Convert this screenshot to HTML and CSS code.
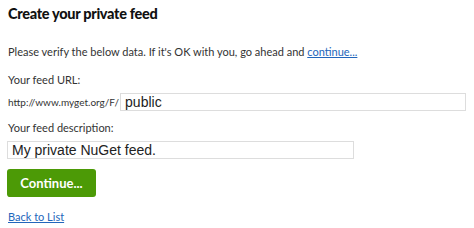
FILE: index.html
```html
<!DOCTYPE html>
<html lang="en">
  <head>
    <meta charset="UTF-8" />
    <title>Create your private feed</title>
    <link rel="stylesheet" href="styles.css">
  </head>
  <body>
    <h1>Create your private feed</h1>

    <p class="intro">
      Please verify the below data. If it's OK with you, go ahead and
      <a href="#">continue...</a>
    </p>

    <form class="feed-form">
      <div class="field">
        <label for="feed-url">Your feed URL:</label>
        <div class="url-row">
          <span class="prefix">http://www.myget.org/F/</span>
          <input id="feed-url" class="url-input" type="text" value="public" />
        </div>
      </div>

      <div class="field">
        <label for="feed-desc">Your feed description:</label>
        <input id="feed-desc" class="desc-input" type="text" value="My private NuGet feed." />
      </div>

      <button type="button" class="continue-btn">Continue...</button>
    </form>

    <a class="back" href="#">Back to List</a>
  </body>
</html>
```

FILE: styles.css
```css
body {
  margin: 0;
  padding: 4px 8px;
  font-family: Lato, "Open Sans", sans-serif;
  font-size: 11px;
  line-height: 14px;
  color: #333;
  background: white;
}
h1 {
  margin: 0;
  font-size: 14.5px;
  font-weight: 900;
  letter-spacing: -0.3px;
  color: #111;
  line-height: 20px;
}
a {
  color: #2266bb;
}
.intro {
  margin: 21px 0 14px 0;
}
.feed-form {
  margin: 0;
}
.field {
  margin-bottom: 10px;
}
.field label {
  display: block;
  margin-bottom: 6px;
}
.url-row {
  display: flex;
  align-items: center;
  gap: 1px;
}
.prefix {
  font-size: 10px;
}
input {
  display: block;
  font-family: "Liberation Sans", Arial, sans-serif;
  font-size: 14px;
  height: 18px;
  padding: 0 4px;
  border: 1px solid #ddd;
  box-sizing: border-box;
  color: #222;
}
.url-input {
  width: 347px;
}
.desc-input {
  width: 347px;
  margin-left: -1px;
}
.continue-btn {
  display: block;
  margin-left: -1px;
  width: 89px;
  height: 28px;
  background: #4c9a06;
  color: white;
  border: none;
  border-radius: 3px;
  font-family: Lato, "Open Sans", sans-serif;
  font-weight: bold;
  font-size: 13px;
  cursor: pointer;
}
.back {
  display: inline-block;
  margin-top: 13px;
}
```
